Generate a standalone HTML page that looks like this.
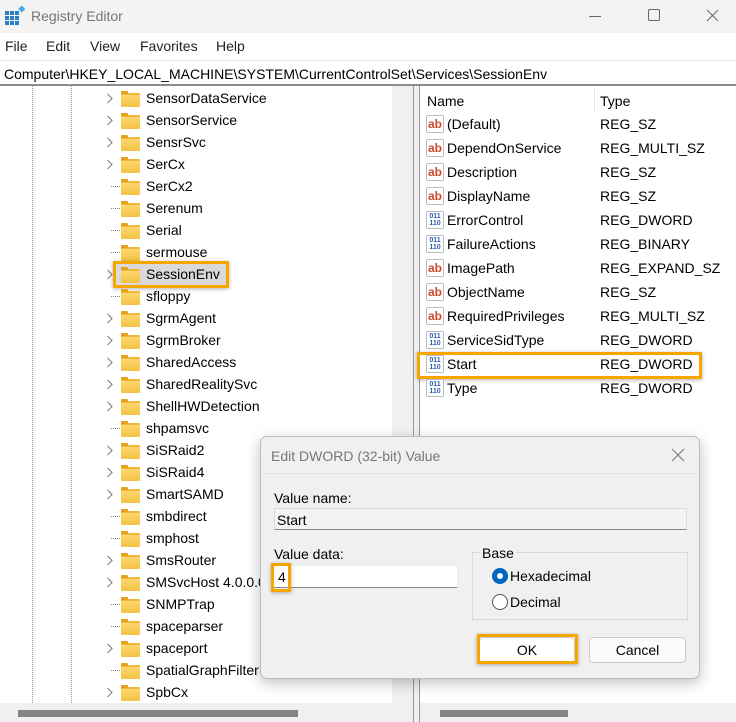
<!DOCTYPE html>
<html><head><style>
*{margin:0;padding:0;box-sizing:border-box}
body{width:736px;height:722px;overflow:hidden;background:#fff;font-family:"Liberation Sans",sans-serif;font-size:14px;color:#000;position:relative}
.abs{position:absolute}
.title{left:0;top:0;width:736px;height:33px;background:#f3f3f3}
.menu{top:34px;left:0;width:736px;height:25px;background:#fff}
.menu span{position:absolute;top:4px;color:#222}
.addr{top:60px;left:0;width:736px;height:24px;border-top:1px solid #e5e5e5;background:#fff;padding:5px 0 0 4px;white-space:nowrap}
.sep{top:84px;left:0;width:736px;height:2px;background:#8c8c8c}
.tree{top:86px;left:0;width:392px;height:617px;background:#fff;overflow:hidden}
.row{position:absolute;left:0;height:22px;width:392px}
.row .t{position:absolute;left:146px;top:3px;white-space:nowrap}
.row .f{position:absolute;left:121px;top:6px;width:19px;height:14px;background:linear-gradient(#fbd870,#f4c143);border-top:2px solid #f0b83a;border-radius:1px}
.row .f::before{content:"";position:absolute;left:0;top:-4px;width:7px;height:3px;background:#e5a020;border-radius:1px 1px 0 0}
.row .c{position:absolute;left:106px;top:6px;width:8px;height:11px}
.row .d{position:absolute;left:111px;top:11px;width:9px;border-top:1px dotted #888}
.vl{position:absolute;border-left:1px dotted #999;top:0;height:617px}
.right{top:86px;left:420px;width:316px;height:617px;background:#fff}
.rr{position:absolute;left:0;height:24px;width:316px}
.rr .n{position:absolute;left:27px;top:3px;white-space:nowrap}
.rr .ty{position:absolute;left:180px;top:3px}
.ab{position:absolute;left:6px;top:2px;width:18px;height:18px;border:1px solid #bbb;background:#fff;color:#d24a2e;font-weight:bold;font-size:12px;line-height:16px;text-align:center;border-radius:2px}
.bn{position:absolute;left:6px;top:2px;width:18px;height:18px;border:1px solid #bbb;background:#fff;color:#2a5db0;font-weight:bold;font-size:7px;line-height:7px;text-align:center;padding-top:1px;border-radius:2px}
.hl{border:3px solid #f5a700;box-shadow:0 1px 4px rgba(0,0,0,.3)}
</style></head><body>
<svg width="0" height="0" style="position:absolute"><defs><symbol id="chev" viewBox="0 0 8 11"><path d="M1.5 1L6 5.5L1.5 10" fill="none" stroke="#808080" stroke-width="1.1"/></symbol></defs></svg>
<div class="abs title">
 <svg class="abs" style="left:5px;top:6px" width="20" height="20"><g fill="#2b7fc6"><rect x="0" y="5" width="4" height="4"/><rect x="5" y="5" width="4" height="4"/><rect x="10" y="5" width="4" height="4"/><rect x="0" y="10" width="4" height="4"/><rect x="5" y="10" width="4" height="4"/><rect x="10" y="10" width="4" height="4"/><rect x="0" y="15" width="4" height="4"/><rect x="5" y="15" width="4" height="4"/><rect x="10" y="15" width="4" height="4"/></g><rect x="14" y="0" width="5" height="5" fill="#4aa6e6" transform="rotate(45 16 3)"/></svg>
 <span class="abs" style="left:31px;top:8px;color:#777;font-size:14px">Registry Editor</span>
 <div class="abs" style="left:589px;top:16px;width:12px;border-top:1px solid #666"></div>
 <div class="abs" style="left:648px;top:9px;width:12px;height:12px;border:1px solid #666;border-radius:2px"></div>
 <svg class="abs" style="left:706px;top:9px" width="13" height="13"><path d="M1 1L12 12M12 1L1 12" stroke="#666" stroke-width="1"/></svg>
</div>
<div class="abs menu"><span style="left:5px">File</span><span style="left:46px">Edit</span><span style="left:90px">View</span><span style="left:140px">Favorites</span><span style="left:216px">Help</span></div>
<div class="abs addr">Computer\HKEY_LOCAL_MACHINE\SYSTEM\CurrentControlSet\Services\SessionEnv</div>
<div class="abs sep"></div>
<div class="abs tree">
<div class="vl" style="left:32px"></div><div class="vl" style="left:71px"></div>
<div class="row" style="top:1px"><svg class="c"><use href="#chev"/></svg><div class="f"></div><span class="t">SensorDataService</span></div>
<div class="row" style="top:23px"><svg class="c"><use href="#chev"/></svg><div class="f"></div><span class="t">SensorService</span></div>
<div class="row" style="top:45px"><svg class="c"><use href="#chev"/></svg><div class="f"></div><span class="t">SensrSvc</span></div>
<div class="row" style="top:67px"><svg class="c"><use href="#chev"/></svg><div class="f"></div><span class="t">SerCx</span></div>
<div class="row" style="top:89px"><div class="d"></div><div class="f"></div><span class="t">SerCx2</span></div>
<div class="row" style="top:111px"><div class="d"></div><div class="f"></div><span class="t">Serenum</span></div>
<div class="row" style="top:133px"><div class="d"></div><div class="f"></div><span class="t">Serial</span></div>
<div class="row" style="top:155px"><div class="d"></div><div class="f"></div><span class="t">sermouse</span></div>
<div class="row" style="top:177px"><svg class="c"><use href="#chev"/></svg><div class="abs" style="left:114px;top:-1px;width:114px;height:25px;background:#d9d9d9"></div><div class="f"></div><span class="t">SessionEnv</span><div class="abs hl" style="left:113px;top:-2px;width:116px;height:27px"></div></div>
<div class="row" style="top:199px"><div class="d"></div><div class="f"></div><span class="t">sfloppy</span></div>
<div class="row" style="top:221px"><svg class="c"><use href="#chev"/></svg><div class="f"></div><span class="t">SgrmAgent</span></div>
<div class="row" style="top:243px"><svg class="c"><use href="#chev"/></svg><div class="f"></div><span class="t">SgrmBroker</span></div>
<div class="row" style="top:265px"><svg class="c"><use href="#chev"/></svg><div class="f"></div><span class="t">SharedAccess</span></div>
<div class="row" style="top:287px"><svg class="c"><use href="#chev"/></svg><div class="f"></div><span class="t">SharedRealitySvc</span></div>
<div class="row" style="top:309px"><svg class="c"><use href="#chev"/></svg><div class="f"></div><span class="t">ShellHWDetection</span></div>
<div class="row" style="top:331px"><div class="d"></div><div class="f"></div><span class="t">shpamsvc</span></div>
<div class="row" style="top:353px"><svg class="c"><use href="#chev"/></svg><div class="f"></div><span class="t">SiSRaid2</span></div>
<div class="row" style="top:375px"><svg class="c"><use href="#chev"/></svg><div class="f"></div><span class="t">SiSRaid4</span></div>
<div class="row" style="top:397px"><svg class="c"><use href="#chev"/></svg><div class="f"></div><span class="t">SmartSAMD</span></div>
<div class="row" style="top:419px"><div class="d"></div><div class="f"></div><span class="t">smbdirect</span></div>
<div class="row" style="top:441px"><div class="d"></div><div class="f"></div><span class="t">smphost</span></div>
<div class="row" style="top:463px"><svg class="c"><use href="#chev"/></svg><div class="f"></div><span class="t">SmsRouter</span></div>
<div class="row" style="top:485px"><svg class="c"><use href="#chev"/></svg><div class="f"></div><span class="t">SMSvcHost 4.0.0.0</span></div>
<div class="row" style="top:507px"><div class="d"></div><div class="f"></div><span class="t">SNMPTrap</span></div>
<div class="row" style="top:529px"><div class="d"></div><div class="f"></div><span class="t">spaceparser</span></div>
<div class="row" style="top:551px"><svg class="c"><use href="#chev"/></svg><div class="f"></div><span class="t">spaceport</span></div>
<div class="row" style="top:573px"><div class="d"></div><div class="f"></div><span class="t">SpatialGraphFilter</span></div>
<div class="row" style="top:595px"><svg class="c"><use href="#chev"/></svg><div class="f"></div><span class="t">SpbCx</span></div>
</div>
<div class="abs" style="left:392px;top:86px;width:21px;height:617px;background:#f0f0f0"></div>
<div class="abs" style="left:413px;top:86px;width:7px;height:636px;background:#f0f0f0;border-left:1px solid #999;border-right:1px solid #999"></div>
<div class="abs" style="left:0;top:703px;width:413px;height:19px;background:#f0f0f0"></div>
<div class="abs" style="left:18px;top:710px;width:280px;height:7px;background:#858585"></div>
<div class="abs" style="left:420px;top:703px;width:316px;height:19px;background:#f0f0f0"></div>
<div class="abs" style="left:440px;top:710px;width:128px;height:7px;background:#858585"></div>
<div class="abs right">
 <span class="abs" style="left:7px;top:7px">Name</span><div class="abs" style="left:174px;top:2px;height:24px;border-left:1px solid #e5e5e5"></div><span class="abs" style="left:180px;top:7px">Type</span>
 <div class="rr" style="top:27px"><div class="ab">ab</div><span class="n">(Default)</span><span class="ty">REG_SZ</span></div>
 <div class="rr" style="top:51px"><div class="ab">ab</div><span class="n">DependOnService</span><span class="ty">REG_MULTI_SZ</span></div>
 <div class="rr" style="top:75px"><div class="ab">ab</div><span class="n">Description</span><span class="ty">REG_SZ</span></div>
 <div class="rr" style="top:99px"><div class="ab">ab</div><span class="n">DisplayName</span><span class="ty">REG_SZ</span></div>
 <div class="rr" style="top:123px"><div class="bn">011<br>110</div><span class="n">ErrorControl</span><span class="ty">REG_DWORD</span></div>
 <div class="rr" style="top:147px"><div class="bn">011<br>110</div><span class="n">FailureActions</span><span class="ty">REG_BINARY</span></div>
 <div class="rr" style="top:171px"><div class="ab">ab</div><span class="n">ImagePath</span><span class="ty">REG_EXPAND_SZ</span></div>
 <div class="rr" style="top:195px"><div class="ab">ab</div><span class="n">ObjectName</span><span class="ty">REG_SZ</span></div>
 <div class="rr" style="top:219px"><div class="ab">ab</div><span class="n">RequiredPrivileges</span><span class="ty">REG_MULTI_SZ</span></div>
 <div class="rr" style="top:243px"><div class="bn">011<br>110</div><span class="n">ServiceSidType</span><span class="ty">REG_DWORD</span></div>
 <div class="rr" style="top:267px"><div class="bn">011<br>110</div><span class="n">Start</span><span class="ty">REG_DWORD</span><div class="abs hl" style="left:-3px;top:-1px;width:285px;height:27px"></div></div>
 <div class="rr" style="top:291px"><div class="bn">011<br>110</div><span class="n">Type</span><span class="ty">REG_DWORD</span></div>
</div>
<div class="abs" style="left:260px;top:436px;width:440px;height:243px;background:#f0f0f0;border:1px solid #bdbdbd;border-radius:7px;box-shadow:0 4px 14px rgba(0,0,0,.25)">
 <span class="abs" style="left:10px;top:11px;color:#777">Edit DWORD (32-bit) Value</span>
 <svg class="abs" style="left:410px;top:11px" width="14" height="14"><path d="M1 1L13 13M13 1L1 13" stroke="#777"/></svg>
 <div class="abs" style="left:0;top:36px;width:438px;border-top:1px solid #e3e3e3"></div>
 <span class="abs" style="left:13px;top:53px">Value name:</span>
 <div class="abs" style="left:13px;top:71px;width:413px;height:22px;background:#f3f3f3;border:1px solid #ddd;border-bottom:1px solid #888;padding:3px 2px">Start</div>
 <span class="abs" style="left:13px;top:109px">Value data:</span>
 <div class="abs" style="left:13px;top:129px;width:183px;height:22px;background:#fff;border-bottom:1px solid #888;padding:3px 4px">4</div>
 <div class="abs hl" style="left:10px;top:126px;width:20px;height:29px"></div>
 <div class="abs" style="left:211px;top:115px;width:216px;height:68px;border:1px solid #d8d8d8"></div>
 <span class="abs" style="left:219px;top:108px;background:#f0f0f0;padding:0 2px">Base</span>
 <div class="abs" style="left:231px;top:131px;width:16px;height:16px;border-radius:50%;background:#0067c0"><div class="abs" style="left:5px;top:5px;width:6px;height:6px;border-radius:50%;background:#fff"></div></div>
 <span class="abs" style="left:249px;top:131px">Hexadecimal</span>
 <div class="abs" style="left:231px;top:157px;width:16px;height:16px;border-radius:50%;border:1px solid #555;background:#fff"></div>
 <span class="abs" style="left:249px;top:157px">Decimal</span>
 <div class="abs" style="left:218px;top:200px;width:96px;height:26px;background:#fff;border:1px solid #ccc;border-radius:4px;text-align:center;line-height:24px">OK</div>
 <div class="abs hl" style="left:216px;top:197px;width:101px;height:30px"></div>
 <div class="abs" style="left:328px;top:200px;width:97px;height:26px;background:#fbfbfb;border:1px solid #ccc;border-radius:4px;text-align:center;line-height:24px">Cancel</div>
</div>
</body></html>
